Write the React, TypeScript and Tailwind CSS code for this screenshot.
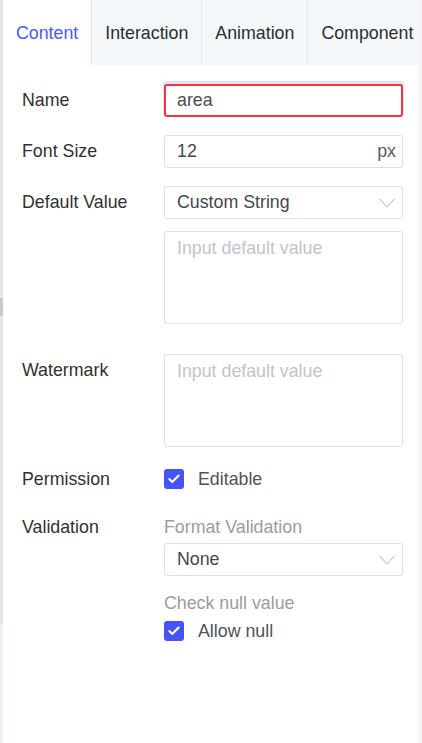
import { Check } from "lucide-react";

const TABS = ["Content", "Interaction", "Animation", "Component"];

function Field({ label, children, className = "" }: { label: string; children: React.ReactNode; className?: string }) {
  return (
    <div className={`flex ${className}`}>
      <div className="h-[33px] w-[142px] shrink-0 leading-[33px] text-[#303133]">{label}</div>
      <div className="min-w-0 flex-1">{children}</div>
    </div>
  );
}

function Chevron() {
  return (
    <svg width="16" height="10" viewBox="0 0 16 10" fill="none" className="text-[#c0c4cc]">
      <polyline points="0.5,0.8 8,9 15.5,0.8" stroke="currentColor" strokeWidth="1.1" />
    </svg>
  );
}

function Select({ value }: { value: string }) {
  return (
    <div className="flex h-[33px] items-center justify-between rounded-[3px] border border-[#dcdfe6] bg-white pl-3 pr-[7px] text-[#45474d]">
      <span>{value}</span>
      <Chevron />
    </div>
  );
}

function TextArea() {
  return (
    <div className="h-[93px] rounded-[3px] border border-[#dcdfe6] bg-white px-3 pt-[3px] text-[#c0c4cc]">
      Input default value
    </div>
  );
}

function Checkbox({ label }: { label: string }) {
  return (
    <div className="flex items-center gap-[14px]">
      <span className="flex h-5 w-5 items-center justify-center rounded-[3px] bg-[#4754f5]">
        <Check className="h-[14px] w-[14px] text-white" strokeWidth={3.5} />
      </span>
      <span className="text-[#505257]">{label}</span>
    </div>
  );
}

export default function App() {
  return (
    <div
      className="flex h-[743px] w-[422px] bg-white text-[17.8px]"
      style={{ fontFamily: '"Liberation Sans", Arial, sans-serif' }}
    >
      {/* neighbour panel edge */}
      <div className="flex w-[3px] shrink-0 flex-col">
        <div className="h-[298px] bg-[#e6e7ea]" />
        <div className="h-[18px] bg-[#c9cace]" />
        <div className="h-[309px] bg-[#e6e7ea]" />
        <div className="flex-1 bg-[#eef0fa]" />
      </div>

      <div className="flex min-w-0 flex-1 flex-col">
        {/* Tabs */}
        <div className="flex h-[65px] shrink-0 bg-[#f5f8fb]">
          {TABS.map((tab, i) => (
            <div
              key={tab}
              className={`flex items-center border-r border-[#e7ebef] px-[13px] pt-[2px] ${
                i === 0 ? "bg-white text-[#4b5afa]" : "text-[#2b2d31]"
              } ${i === TABS.length - 1 ? "flex-1 border-r-0" : ""}`}
            >
              {tab}
            </div>
          ))}
        </div>

        {/* Form */}
        <div className="pl-[19px] pr-[15px] pt-[19px]">
          <Field label="Name" className="mb-[18px]">
            <div className="h-[33px] rounded-[3px] border-2 border-[#f2353f] bg-white pl-[11px] leading-[29px] text-[#4a4c52] shadow-[0_-2px_0_1px_#dfe2fd]">
              area
            </div>
          </Field>

          <Field label="Font Size" className="mb-[18px]">
            <div className="flex h-[33px] items-center justify-between rounded-[3px] border border-[#dcdfe6] bg-white pl-3 pr-[6px] text-[#45474d]">
              <span>12</span>
              <span className="text-[#5a5c61]">px</span>
            </div>
          </Field>

          <Field label="Default Value" className="mb-[30px]">
            <Select value="Custom String" />
            <div className="mt-3">
              <TextArea />
            </div>
          </Field>

          <Field label="Watermark" className="mb-4">
            <TextArea />
          </Field>

          <div className="mb-4 flex h-8 items-center">
            <div className="w-[142px] shrink-0 text-[#303133]">Permission</div>
            <Checkbox label="Editable" />
          </div>

          <div className="flex">
            <div className="h-8 w-[142px] shrink-0 leading-8 text-[#303133]">Validation</div>
            <div className="min-w-0 flex-1">
              <div className="h-8 leading-8 text-[#9a9ca1]">Format Validation</div>
              <Select value="None" />
              <div className="mt-[11px] h-8 leading-8 text-[#9a9ca1]">Check null value</div>
              <div className="flex h-6 items-center">
                <Checkbox label="Allow null" />
              </div>
            </div>
          </div>
        </div>
      </div>

      <div className="w-[4px] shrink-0 bg-[#f3f5f8]" />
    </div>
  );
}
